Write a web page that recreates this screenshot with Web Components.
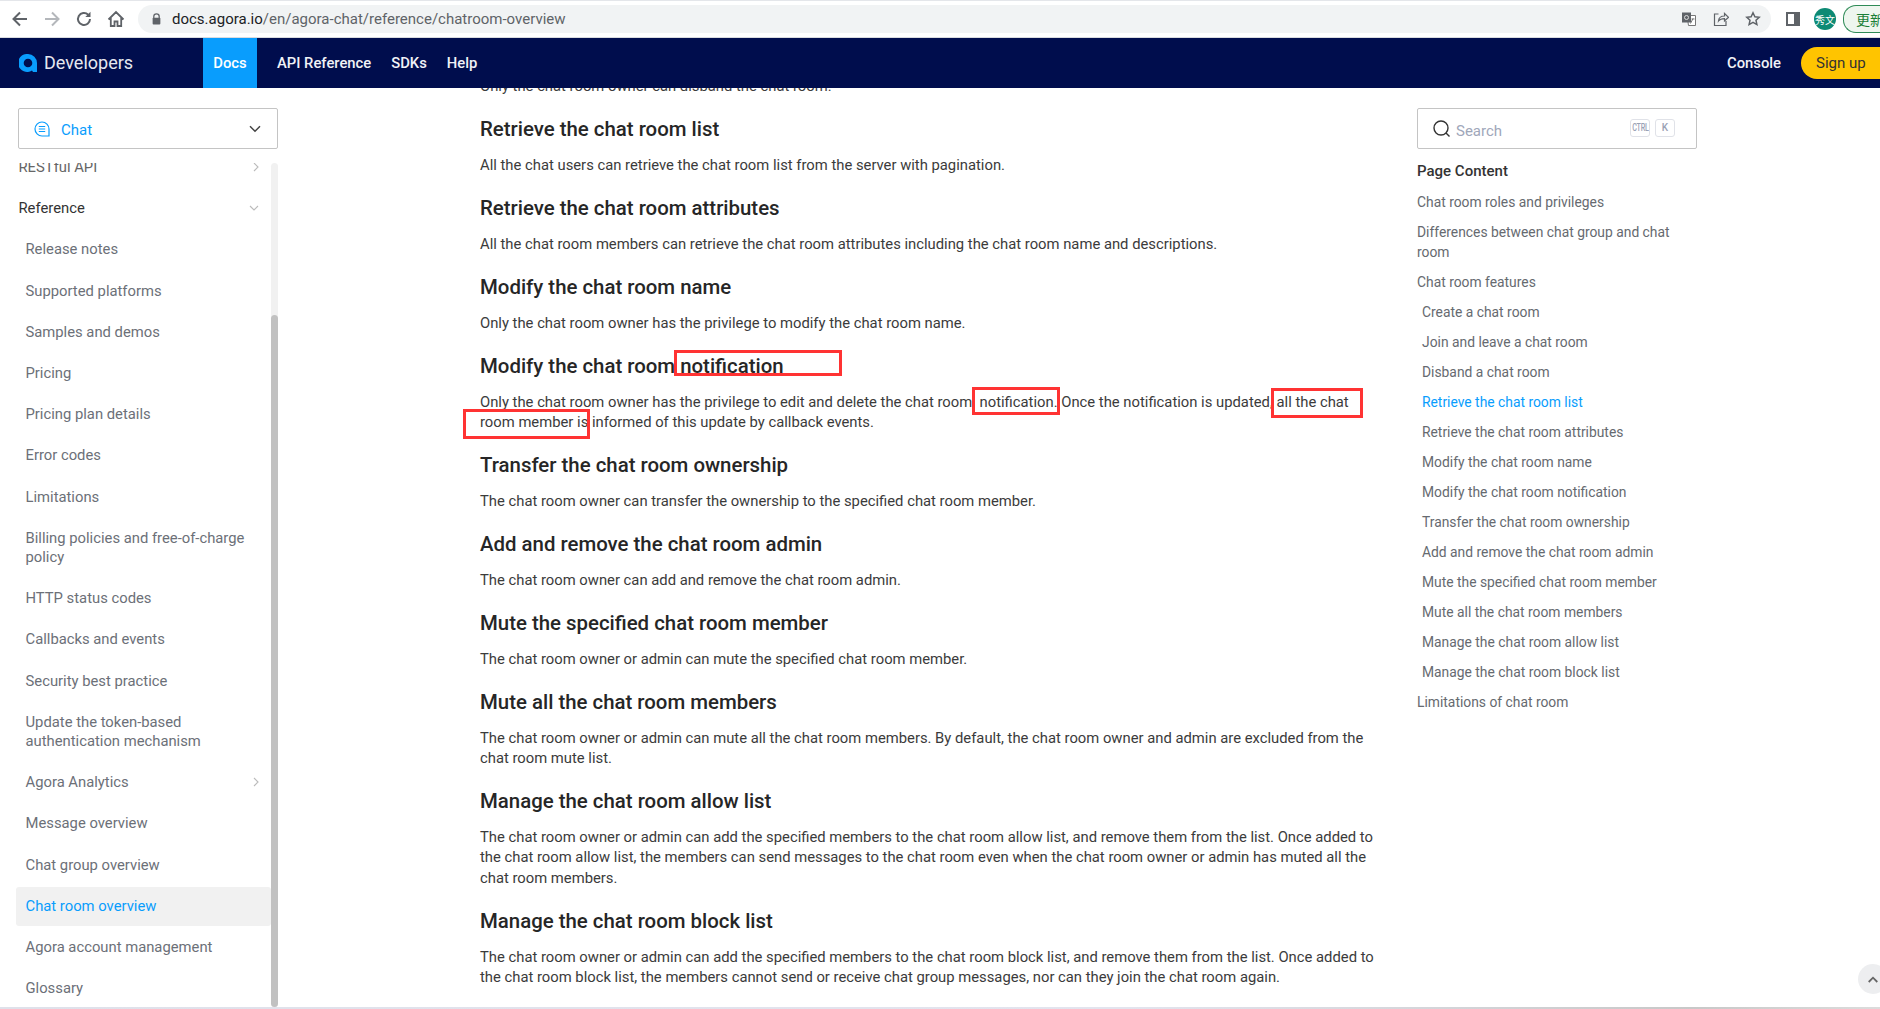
<!DOCTYPE html>
<html>
<head>
<meta charset="utf-8">
<style>
html,body{margin:0;height:100%;overflow:hidden;background:#fff;font-family:Roboto,"Noto Sans CJK SC",sans-serif;}
app-shell{height:1009px;}
</style>
</head>
<body>
<app-shell>
  <browser-bar slot="bar"></browser-bar>
  <site-header slot="header"></site-header>
  <side-nav slot="side">
    <nav-item clipped arrow="right">RESTful API</nav-item>
    <nav-item top arrow="down">Reference</nav-item>
    <nav-item>Release notes</nav-item>
    <nav-item>Supported platforms</nav-item>
    <nav-item>Samples and demos</nav-item>
    <nav-item>Pricing</nav-item>
    <nav-item>Pricing plan details</nav-item>
    <nav-item>Error codes</nav-item>
    <nav-item>Limitations</nav-item>
    <nav-item>Billing policies and free-of-charge policy</nav-item>
    <nav-item>HTTP status codes</nav-item>
    <nav-item>Callbacks and events</nav-item>
    <nav-item>Security best practice</nav-item>
    <nav-item>Update the token-based authentication mechanism</nav-item>
    <nav-item arrow="right">Agora Analytics</nav-item>
    <nav-item>Message overview</nav-item>
    <nav-item>Chat group overview</nav-item>
    <nav-item active>Chat room overview</nav-item>
    <nav-item>Agora account management</nav-item>
    <nav-item>Glossary</nav-item>
  </side-nav>
  <doc-article slot="main">
    <doc-section clipped>
      Only the chat room owner can disband the chat room.
    </doc-section>
    <doc-section title="Retrieve the chat room list">All the chat users can retrieve the chat room list from the server with pagination.</doc-section>
    <doc-section title="Retrieve the chat room attributes">All the chat room members can retrieve the chat room attributes including the chat room name and descriptions.</doc-section>
    <doc-section title="Modify the chat room name">Only the chat room owner has the privilege to modify the chat room name.</doc-section>
    <doc-section title="Modify the chat room notification">Only the chat room owner has the privilege to edit and delete the chat room&nbsp; notification. Once the notification is updated, all the chat room member is informed of this update by callback events.</doc-section>
    <doc-section title="Transfer the chat room ownership">The chat room owner can transfer the ownership to the specified chat room member.</doc-section>
    <doc-section title="Add and remove the chat room admin">The chat room owner can add and remove the chat room admin.</doc-section>
    <doc-section title="Mute the specified chat room member">The chat room owner or admin can mute the specified chat room member.</doc-section>
    <doc-section title="Mute all the chat room members">The chat room owner or admin can mute all the chat room members. By default, the chat room owner and admin are excluded from the chat room mute list.</doc-section>
    <doc-section title="Manage the chat room allow list">The chat room owner or admin can add the specified members to the chat room allow list, and remove them from the list. Once added to the chat room allow list, the members can send messages to the chat room even when the chat room owner or admin has muted all the chat room members.</doc-section>
    <doc-section title="Manage the chat room block list">The chat room owner or admin can add the specified members to the chat room block list, and remove them from the list. Once added to the chat room block list, the members cannot send or receive chat group messages, nor can they join the chat room again.</doc-section>
    <annot-box style="left:194px;top:274px;width:168px;height:26px"></annot-box>
    <annot-box style="left:492px;top:311px;width:88px;height:28px"></annot-box>
    <annot-box style="left:791px;top:312px;width:92px;height:30px"></annot-box>
    <annot-box style="left:-17px;top:333px;width:127px;height:30px"></annot-box>
  </doc-article>
  <page-toc slot="toc">
    <toc-link>Chat room roles and privileges</toc-link>
    <toc-link>Differences between chat group and chat room</toc-link>
    <toc-link>Chat room features</toc-link>
    <toc-link sub>Create a chat room</toc-link>
    <toc-link sub>Join and leave a chat room</toc-link>
    <toc-link sub>Disband a chat room</toc-link>
    <toc-link sub active>Retrieve the chat room list</toc-link>
    <toc-link sub>Retrieve the chat room attributes</toc-link>
    <toc-link sub>Modify the chat room name</toc-link>
    <toc-link sub>Modify the chat room notification</toc-link>
    <toc-link sub>Transfer the chat room ownership</toc-link>
    <toc-link sub>Add and remove the chat room admin</toc-link>
    <toc-link sub>Mute the specified chat room member</toc-link>
    <toc-link sub>Mute all the chat room members</toc-link>
    <toc-link sub>Manage the chat room allow list</toc-link>
    <toc-link sub>Manage the chat room block list</toc-link>
    <toc-link>Limitations of chat room</toc-link>
  </page-toc>
  <back-top slot="over"></back-top>
</app-shell>

<script>
// small helper, every element does the same thing in its constructor
function shadow(el, html) {
  el.attachShadow({ mode: 'open' }).innerHTML = html;
}

class AppShell extends HTMLElement {
  constructor() {
    super();
    shadow(this, `
    <style>
      :host{display:flex;flex-direction:column;position:relative;overflow:hidden;}
      .row{flex:1;min-height:0;display:grid;grid-template-columns:278px 202px 900px 37px 280px;overflow:hidden;}
      .strip{height:2px;background:linear-gradient(90deg,#dfe1ea,#e3e4ee 60%,#c8c8c8 90%,#dcdcdc);}
    </style>
    <slot name="bar"></slot>
    <slot name="header"></slot>
    <div class="row">
      <slot name="side"></slot><div></div>
      <slot name="main"></slot><div></div>
      <slot name="toc"></slot>
    </div>
    <div class="strip"></div>
    <slot name="over"></slot>`);
  }
}
customElements.define('app-shell', AppShell);

class BrowserBar extends HTMLElement {
  constructor() {
    super();
    shadow(this, `
    <style>
      :host{display:flex;align-items:center;height:36px;border-top:1px solid #e4e6ea;border-bottom:1px solid #dadce0;background:#fff;overflow:hidden;}
      .nav{display:flex;gap:8px;padding-left:8px;width:138px;box-sizing:border-box;flex:none;}
      svg{display:block;flex:none;}
      .btn{width:24px;height:24px;display:flex;align-items:center;justify-content:center;flex:none;}
      .omni{flex:none;width:1633px;height:28px;border-radius:14px;background:#f1f3f4;display:flex;align-items:center;box-sizing:border-box;padding-left:14px;}
      .url{font:15px Roboto,sans-serif;color:#5f6368;margin-left:11px;flex:1;white-space:nowrap;}
      .url b{font-weight:400;color:#202124;}
      .tools{display:flex;gap:8px;padding-right:6px;}
      .after{display:flex;align-items:center;margin-left:10px;gap:9px;}
      .avatar{width:22px;height:22px;border-radius:50%;background:#0d8a74;color:#fff;font:10px "Noto Sans CJK SC",sans-serif;display:flex;align-items:center;justify-content:center;}
      .pill{height:26px;width:60px;border:1px solid #2e8b57;border-radius:13px 0 0 13px;border-right:0;background:#eef6ef;color:#1a7f37;font:14px "Noto Sans CJK SC",sans-serif;padding-left:12px;line-height:26px;margin-left:-2px;white-space:nowrap;}
    </style>
    <div class="nav">
      <div class="btn"><svg width="18" height="18" viewBox="0 0 18 18" fill="none" stroke="#5f6368" stroke-width="2"><path d="M16 9H3M9 2.500 2.500 9 9 15.500"/></svg></div>
      <div class="btn"><svg width="18" height="18" viewBox="0 0 18 18" fill="none" stroke="#b4b7bb" stroke-width="2"><path d="M2 9h13M9 2.500 15.500 9 9 15.500"/></svg></div>
      <div class="btn"><svg width="18" height="18" viewBox="0 0 18 18" fill="none" stroke="#5f6368" stroke-width="2"><path d="M15 9a6 6 0 1 1-1.800-4.300"/><path d="M15.500 1.800V7h-5.200z" fill="#5f6368" stroke="none"/></svg></div>
      <div class="btn"><svg width="18" height="18" viewBox="0 0 18 18" fill="none" stroke="#5f6368" stroke-width="1.800"><path d="M1.500 9.500 9 2l7.500 7.500M3.800 8v8h3.700v-4.500h3V16h3.700V8"/></svg></div>
    </div>
    <div class="omni">
      <svg width="9" height="12" viewBox="0 0 10 13"><path d="M2 5.500V3.800a3 3 0 0 1 6 0v1.700" fill="none" stroke="#5f6368" stroke-width="1.400"/><rect x="0.700" y="5" width="8.600" height="7.500" rx="1" fill="#5f6368"/></svg>
      <div class="url"><b>docs.agora.io</b>/en/agora-chat/reference/chatroom-overview</div>
      <div class="tools">
        <div class="btn"><svg width="16" height="16" viewBox="0 0 16 16"><path d="M6 4.500h8.500v10H7.500z" fill="#fff" stroke="#777"/><rect x="1" y="1.500" width="9" height="10" fill="#5f6368"/><circle cx="5.500" cy="6.500" r="2" fill="none" stroke="#ddd"/><path d="M9.500 12.500l2.500-5M10.500 8h3" stroke="#777" fill="none"/></svg></div>
        <div class="btn"><svg width="16" height="16" viewBox="0 0 16 16" fill="none" stroke="#5f6368" stroke-width="1.200"><path d="M5.500 3H1.500v11.500H13V10"/><path d="M5.500 10c.3-3.500 3-5 6-5V2.500l4 3.800-4 3.700V7.600c-2.500 0-4.600.5-6 2.400z"/></svg></div>
        <div class="btn"><svg width="16" height="16" viewBox="0 0 16 16" fill="none" stroke="#5f6368" stroke-width="1.500"><path d="m8 1.800 1.900 4 4.300.5-3.200 3 .9 4.300L8 11.400l-3.900 2.200.9-4.300-3.200-3 4.300-.5z"/></svg></div>
      </div>
    </div>
    <div class="after">
      <div class="btn"><svg width="14" height="14" viewBox="0 0 14 14"><path d="M0 0h14v14H0z" fill="#5f6368"/><path d="M2 2h6v10H2z" fill="#fff"/></svg></div>
      <div class="avatar">秀文</div>
      <div class="pill">更新</div>
    </div>`);
  }
}
customElements.define('browser-bar', BrowserBar);

class SiteHeader extends HTMLElement {
  constructor() {
    super();
    shadow(this, `
    <style>
      :host{display:flex;align-items:stretch;height:50px;background:#000d4d;color:#fff;font:500 14.800px Roboto,sans-serif;flex:none;}
      .logo{display:flex;align-items:center;gap:7px;width:203px;box-sizing:border-box;padding-left:19px;font-size:18px;font-weight:400;color:#e6e8f0;flex:none;padding-bottom:1px;}
      a{display:flex;align-items:center;color:#f1f2f7;}
      .docs{width:54px;justify-content:center;background:#099dfd;color:#fff;margin-right:20px;flex:none;}
      .links{display:flex;gap:20px;flex:1;}
      .right{display:flex;align-items:center;gap:20px;}
      .sign{height:32px;width:79px;border-radius:16px 0 0 16px;background:#ffc400;color:#333;display:flex;align-items:center;padding-left:15px;box-sizing:border-box;font-weight:400;font-size:15px;}
    </style>
    <div class="logo">
      <svg width="18" height="18" viewBox="0 0 18 18"><path d="M9 0a9 9 0 0 1 9 9v6c0 2 .5 3 .5 3H14l-1-1.500A9 9 0 1 1 9 0zm0 4.700a4.300 4.300 0 1 0 0 8.600 4.300 4.300 0 0 0 0-8.600z" fill="#099dfd" fill-rule="evenodd"/></svg>
      Developers
    </div>
    <a class="docs">Docs</a>
    <div class="links"><a>API Reference</a><a>SDKs</a><a>Help</a></div>
    <div class="right"><a>Console</a><div class="sign">Sign up</div></div>`);
  }
}
customElements.define('site-header', SiteHeader);

class SideNav extends HTMLElement {
  constructor() {
    super();
    shadow(this, `
    <style>
      :host{display:flex;flex-direction:column;min-height:0;overflow:hidden;}
      .select{flex:none;margin:20px 0 14px 18px;height:41px;border:1px solid #c4c4c4;border-radius:2px;display:flex;align-items:center;box-sizing:border-box;padding:0 16px 0 15px;color:#099dfd;font:15px Roboto,sans-serif;gap:11px;}
      .select span{flex:1;padding-top:3px;}
      .body{flex:1;min-height:0;display:flex;overflow:hidden;position:relative;}
      .list{flex:1;min-width:0;margin-top:-15px;padding-left:16px;}
      .bar{flex:none;width:7px;background:#f1f1f1;border-radius:4px;position:relative;}
      .thumb{position:absolute;left:0;right:0;top:152px;bottom:0;background:#c1c1c1;border-radius:4px;}
    </style>
    <div class="select">
      <svg width="16" height="16" viewBox="0 0 16 16" fill="none" stroke="#099dfd" stroke-width="1.200"><path d="M8 1a7 7 0 1 0 0 14h7V8a7 7 0 0 0-7-7z"/><path d="M4.800 5.500h6.400M4.800 8h6.400M4.800 10.500h6.400"/></svg>
      <span>Chat</span>
      <svg width="12" height="8" viewBox="0 0 12 8" fill="none" stroke="#444" stroke-width="1.500"><path d="m1 1.200 5 5 5-5"/></svg>
    </div>
    <div class="body">
      <div class="list"><slot></slot></div>
      <div class="bar"><div class="thumb"></div></div>
    </div>`);
  }
}
customElements.define('side-nav', SideNav);

class NavItem extends HTMLElement {
  constructor() {
    super();
    const arrow = this.getAttribute('arrow');
    let icon = '';
    if (arrow === 'right') icon = '<svg width="6" height="10" viewBox="0 0 6 10" fill="none" stroke="#bbb" stroke-width="1.100"><path d="m1 1 4 4-4 4"/></svg>';
    if (arrow === 'down') icon = '<svg width="10" height="6" viewBox="0 0 10 6" fill="none" stroke="#bbb" stroke-width="1.100"><path d="m1 1 4 4 4-4"/></svg>';
    shadow(this, `
    <style>
      :host{display:block;margin-bottom:2px;border-radius:3px;font:14.800px/19.200px Roboto,sans-serif;color:#6c7078;}
      :host([active]){background:#f1f1f1;color:#099dfd;}
      :host([top]),:host([clipped]){color:#333;margin-left:-7px;background:none;}
      :host([clipped]){color:#666;}
      .in{display:flex;align-items:center;justify-content:space-between;padding:10px 12px 10px 9.500px;}
      svg{flex:none;margin-left:8px;margin-top:-2px;}
    </style>
    <div class="in"><div><slot></slot></div>${icon}</div>`);
  }
}
customElements.define('nav-item', NavItem);

class DocArticle extends HTMLElement {
  constructor() {
    super();
    shadow(this, `
    <style>
      :host{display:block;position:relative;margin-top:-12px;height:0;}
    </style>
    <slot></slot>`);
  }
}
customElements.define('doc-article', DocArticle);

class DocSection extends HTMLElement {
  constructor() {
    super();
    const title = this.getAttribute('title');
    shadow(this, `
    <style>
      :host{display:block;margin-bottom:18.500px;color:#333;}
      :host([clipped]){clip-path:inset(12px 0 0 0);}
      h2{margin:0 0 12px;font:500 20.400px/28px Roboto,sans-serif;color:#262626;}
      p{margin:0;font:14.800px/20.400px Roboto,sans-serif;color:#3b3b3b;}
    </style>
    ${title ? `<h2>${title}</h2>` : ''}
    <p><slot></slot></p>`);
  }
}
customElements.define('doc-section', DocSection);

class AnnotBox extends HTMLElement {
  constructor() {
    super();
    shadow(this, `
    <style>
      :host{display:block;position:absolute;box-sizing:border-box;border:3px solid #f33;}
    </style>`);
  }
}
customElements.define('annot-box', AnnotBox);

class PageToc extends HTMLElement {
  constructor() {
    super();
    shadow(this, `
    <style>
      :host{display:block;padding-top:20px;font-family:Roboto,sans-serif;}
      .search{height:41px;border:1px solid #c4c4c4;border-radius:2px;display:flex;align-items:center;box-sizing:border-box;padding:0 21px 0 15px;font-size:15px;color:#a0a7ba;}
      .search span{flex:1;margin-left:5px;padding-top:4px;}
      kbd{font:500 10px Roboto,sans-serif;border:1px solid #e0e2e8;border-radius:3px;width:20px;height:18px;box-sizing:border-box;display:flex;align-items:center;justify-content:center;margin-left:5px;color:#9aa2b5;margin-top:-2px;overflow:hidden;}
      kbd i{font-style:normal;letter-spacing:-.3px;display:block;transform:scaleX(.72);}
      h4{margin:14px 0 12px;font:500 15px/17px Roboto,sans-serif;color:#333;}
    </style>
    <div class="search">
      <svg width="18" height="18" viewBox="0 0 18 18" fill="none" stroke="#333" stroke-width="1.400"><circle cx="8" cy="8" r="7"/><path d="m13 13 3.500 3.500"/></svg>
      <span>Search</span><kbd><i>CTRL</i></kbd><kbd>K</kbd>
    </div>
    <h4>Page Content</h4>
    <slot></slot>`);
  }
}
customElements.define('page-toc', PageToc);

class TocLink extends HTMLElement {
  constructor() {
    super();
    shadow(this, `
    <style>
      :host{display:block;width:262px;font:13.850px/20px Roboto,sans-serif;color:#666a70;margin-bottom:10px;}
      :host([sub]){padding-left:5px;}
      :host([active]){color:#099dfd;}
    </style>
    <slot></slot>`);
  }
}
customElements.define('toc-link', TocLink);

class BackTop extends HTMLElement {
  constructor() {
    super();
    shadow(this, `
    <style>
      :host{position:absolute;left:1858px;top:964px;width:30px;height:30px;border-radius:50%;background:#edeef0;display:flex;align-items:center;justify-content:center;}
    </style>
    <svg width="10" height="7" viewBox="0 0 10 7" fill="none" stroke="#666" stroke-width="1.800"><path d="m.7 6 4.300-4.300L9.300 6"/></svg>`);
  }
}
customElements.define('back-top', BackTop);
</script>
</body>
</html>
